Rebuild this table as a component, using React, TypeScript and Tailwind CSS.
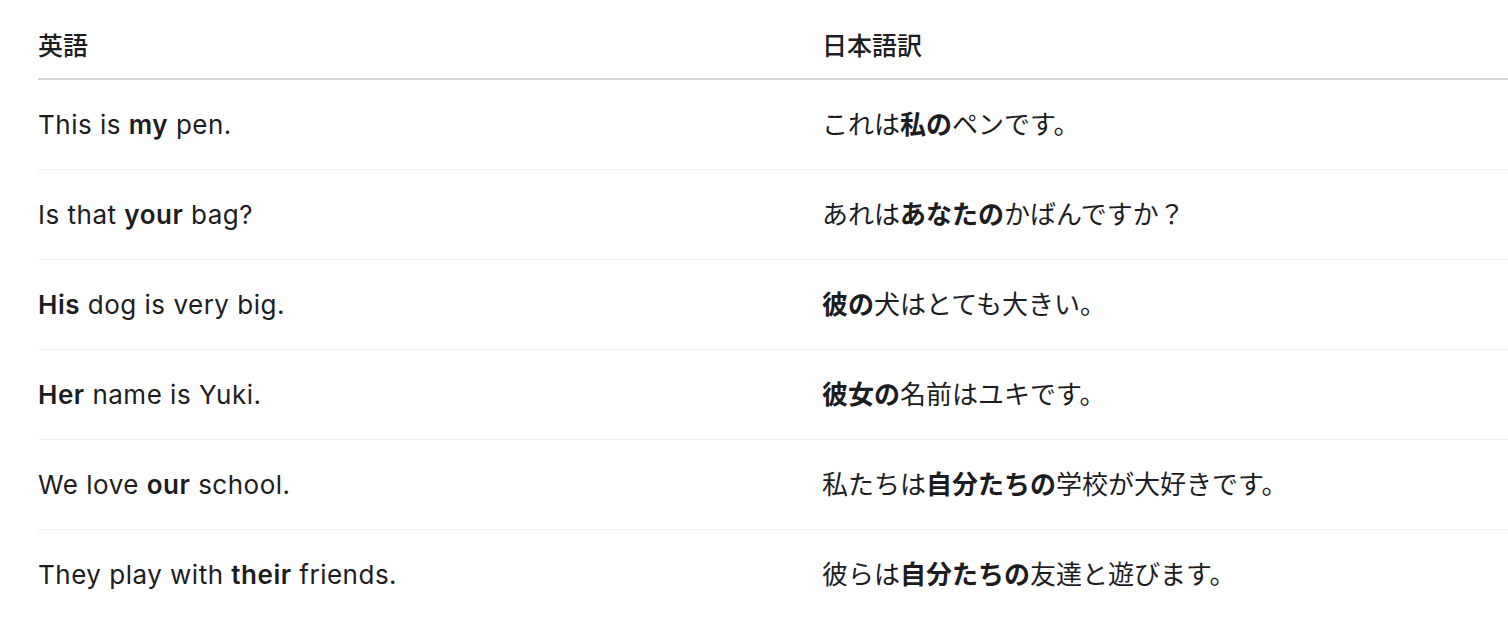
import React from "react";

type Row = { en: React.ReactNode; ja: React.ReactNode };

const B = ({ children }: { children: React.ReactNode }) => (
  <strong className="font-semibold">{children}</strong>
);

const rows: Row[] = [
  { en: <>This is <B>my</B> pen.</>, ja: <>これは<B>私の</B>ペンです。</> },
  { en: <>Is that <B>your</B> bag?</>, ja: <>あれは<B>あなたの</B>かばんですか？</> },
  { en: <><B>His</B> dog is very big.</>, ja: <><B>彼の</B>犬はとても大きい。</> },
  { en: <><B>Her</B> name is Yuki.</>, ja: <><B>彼女の</B>名前はユキです。</> },
  { en: <>We love <B>our</B> school.</>, ja: <>私たちは<B>自分たちの</B>学校が大好きです。</> },
  { en: <>They play with <B>their</B> friends.</>, ja: <>彼らは<B>自分たちの</B>友達と遊びます。</> },
];

export default function App() {
  return (
    <div
      className="min-h-[636px] bg-white text-[#1d1d1f] overflow-hidden"
      style={{ fontFamily: 'Inter, "Noto Sans CJK JP", sans-serif' }}
    >
      <div className="ml-[38px] w-[1500px]">
        <div className="grid grid-cols-[784px_1fr] border-b-2 border-[#d6d6d6] text-[25px] leading-[36px] font-medium">
          <div className="pt-[28px] pb-[14px]">英語</div>
          <div className="pt-[28px] pb-[14px]">日本語訳</div>
        </div>
        {rows.map((r, i) => (
          <div
            key={i}
            className="grid grid-cols-[784px_1fr] border-b border-[#efefef] last:border-b-0 text-[26px] leading-[36px]"
          >
            <div className="pt-[27px] pb-[26px] tracking-[0.5px]">{r.en}</div>
            <div className="pt-[27px] pb-[26px]">{r.ja}</div>
          </div>
        ))}
      </div>
    </div>
  );
}
